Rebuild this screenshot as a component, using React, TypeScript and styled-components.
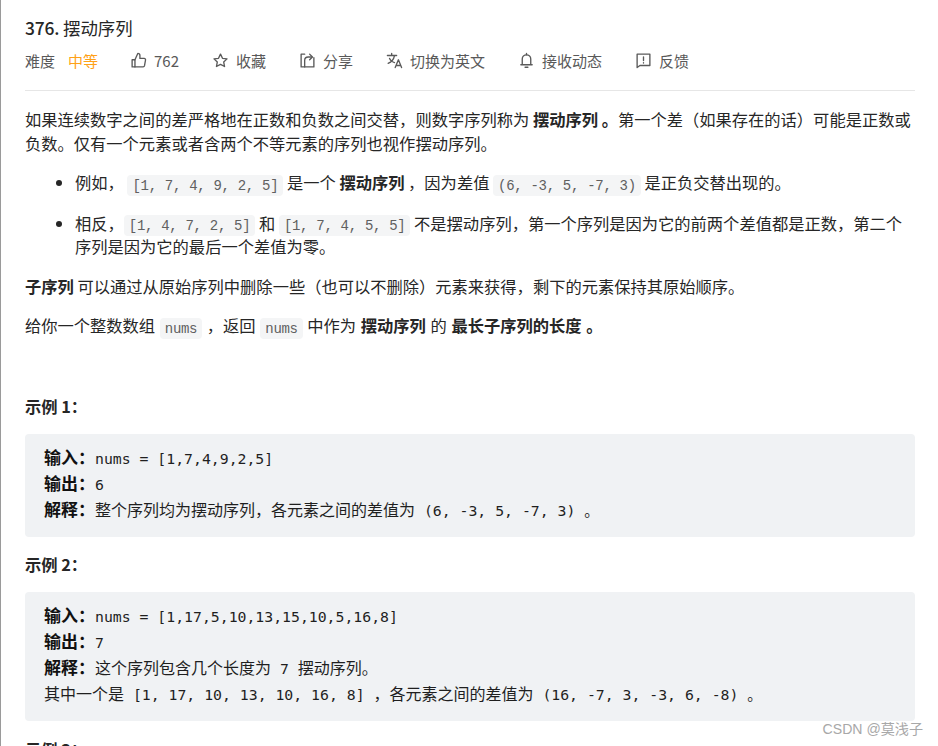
import React from "react";
import styled, { createGlobalStyle } from "styled-components";

const Global = createGlobalStyle`
  html, body { margin: 0; padding: 0; background: #fff; }
  body { width: 938px; height: 746px; overflow: hidden; font-family: "Noto Sans CJK SC", sans-serif; }
`;

const Page = styled.div`
  position: relative;
  box-sizing: border-box;
  width: 938px;
  height: 746px;
  overflow: hidden;
  border-left: 1px solid #9a9a9a;
  padding: 16px 23px 0 24px;
  color: #262626;
`;

const Title = styled.h1`
  margin: 0;
  font-size: 17.4px;
  font-weight: 400;
  line-height: 24px;
  color: #262626;
`;

const Num = styled.span`
  font-weight: 500;
  letter-spacing: -0.2px;
`;

const Meta = styled.div`
  display: flex;
  align-items: center;
  height: 24px;
  margin-top: 8px;
  font-size: 15px;
  color: #595959;
`;

const Level = styled.span`
  color: #ffa116;
  margin-left: 13px;
`;

const Action = styled.span<{ $gap: number }>`
  display: inline-flex;
  align-items: center;
  gap: 7px;
  margin-left: ${(p) => p.$gap}px;
  svg { display: block; }
`;

const Divider = styled.div`
  height: 1px;
  background: #e6e6e6;
  margin: 18px 0 17px;
`;

const Body = styled.div`
  font-size: 16.28px;
  line-height: 23.5px;
  color: #262626;
`;

const Para = styled.p<{ $top?: number; $spread?: boolean }>`
  margin: ${(p) => p.$top ?? 0}px 0 0;
  word-spacing: ${(p) => (p.$spread ? "1px" : "normal")};
`;

const List = styled.ul`
  margin: 16px 0 0;
  padding: 0 0 0 50px;
`;

const Item = styled.li<{ $top?: number }>`
  margin-top: ${(p) => p.$top ?? 0}px;
`;

const Code = styled.code`
  font-family: "Liberation Mono", "Noto Sans CJK SC", monospace;
  font-size: 14px;
  letter-spacing: -0.3px;
  word-spacing: 0;
  line-height: 1;
  color: #606060;
  background: #f4f5f6;
  border-radius: 4px;
  padding: 2.5px 5px;
`;

const Example = styled.h4<{ $top: number }>`
  margin: ${(p) => p.$top}px 0 0;
  font-size: 16.28px;
  line-height: 24px;
  font-weight: 700;
  color: #262626;
`;

const Pre = styled.div`
  margin-top: 16px;
  background: #f0f2f4;
  border-radius: 4px;
  padding: 12px 18px 13px 19px;
  font-family: "DejaVu Sans Mono", "Noto Sans CJK SC", monospace;
  font-size: 14.8px;
  color: #1f1f1f;
`;

const Line = styled.div`
  height: 26px;
  line-height: 26px;
  white-space: pre;
`;

const Label = styled.strong`
  font-family: "Noto Sans CJK SC", sans-serif;
  font-size: 17px;
  line-height: 1;
  color: #111;
`;

const CJK = styled.span`
  font-family: "Noto Sans CJK SC", sans-serif;
  font-size: 16px;
  line-height: 1;
`;

const Watermark = styled.div`
  position: absolute;
  right: 15px;
  bottom: 8px;
  font-family: "Liberation Sans", "Noto Sans CJK SC", sans-serif;
  font-size: 14.1px;
  line-height: 18px;
  color: #a8a8a8;
`;

const Icon = ({ children }: { children: React.ReactNode }) => (
  <svg width="17" height="17" viewBox="0 0 24 24" fill="none" stroke="#5a5a5a" strokeWidth="1.9" strokeLinejoin="round" strokeLinecap="round">
    {children}
  </svg>
);

export default function App() {
  return (
    <Page>
      <Global />
      <Title><Num>376.</Num> 摆动序列</Title>
      <Meta>
        <span>难度</span>
        <Level>中等</Level>
        <Action $gap={32}>
          <Icon>
            <path d="M7 11v10H3V11z" />
            <path d="M7 11l4-9c1.7 0 3 1.3 3 3v4h6c1.2 0 2.1 1.1 1.9 2.3l-1.4 8c-.2 1-1 1.7-2 1.7H7" />
          </Icon>
          <span>762</span>
        </Action>
        <Action $gap={33}>
          <Icon>
            <path d="M12 3l2.8 5.9 6.4.8-4.7 4.4 1.2 6.4L12 17.4l-5.7 3.1 1.2-6.4-4.7-4.4 6.4-.8z" />
          </Icon>
          <span>收藏</span>
        </Action>
        <Action $gap={33}>
          <Icon>
            <path d="M8 3H3v18h18V8" />
            <path d="M8 21v-9c0-3 2-5 5-5h5" />
            <path d="M15 3l4 4-4 4" />
          </Icon>
          <span>分享</span>
        </Action>
        <Action $gap={33}>
          <Icon>
            <path d="M2 5h13M8 2v3M12 5c-1 5-4 9-9 11M5 9c1 3 4 5 7 6" />
            <path d="M13 22l4.5-11L22 22M14.5 19h6" />
          </Icon>
          <span>切换为英文</span>
        </Action>
        <Action $gap={33}>
          <Icon>
            <path d="M6 17V10a6 6 0 0 1 12 0v7" />
            <path d="M4 18h16M10 21.5h4M12 2v2" />
          </Icon>
          <span>接收动态</span>
        </Action>
        <Action $gap={33}>
          <Icon>
            <path d="M3 3h18v16H7l-4 3z" />
            <path d="M12 7v5M12 15v.5" />
          </Icon>
          <span>反馈</span>
        </Action>
      </Meta>
      <Divider />
      <Body>
        <Para>
          如果连续数字之间的差严格地在正数和负数之间交替，则数字序列称为 <strong>摆动序列 。</strong>第一个差（如果存在的话）可能是正数或负数。仅有一个元素或者含两个不等元素的序列也视作摆动序列。
        </Para>
        <List>
          <Item>
            例如， <Code>[1, 7, 4, 9, 2, 5]</Code> 是一个 <strong>摆动序列</strong> ，因为差值 <Code>(6, -3, 5, -7, 3)</Code> 是正负交替出现的。
          </Item>
          <Item $top={17}>
            相反，<Code>[1, 4, 7, 2, 5]</Code> 和 <Code>[1, 7, 4, 5, 5]</Code> 不是摆动序列，第一个序列是因为它的前两个差值都是正数，第二个序列是因为它的最后一个差值为零。
          </Item>
        </List>
        <Para $top={16}>
          <strong>子序列</strong> 可以通过从原始序列中删除一些（也可以不删除）元素来获得，剩下的元素保持其原始顺序。
        </Para>
        <Para $top={16} $spread>
          给你一个整数数组 <Code>nums</Code> ，返回 <Code>nums</Code> 中作为 <strong>摆动序列</strong> 的 <strong>最长子序列的长度 。</strong>
        </Para>
      </Body>
      <Example $top={56}>示例 1：</Example>
      <Pre>
        <Line><Label>输入：</Label>nums = [1,7,4,9,2,5]</Line>
        <Line><Label>输出：</Label>6</Line>
        <Line><Label>解释：</Label><CJK>整个序列均为摆动序列，各元素之间的差值为</CJK> (6, -3, 5, -7, 3) 。</Line>
      </Pre>
      <Example $top={15}>示例 2：</Example>
      <Pre>
        <Line><Label>输入：</Label>nums = [1,17,5,10,13,15,10,5,16,8]</Line>
        <Line><Label>输出：</Label>7</Line>
        <Line><Label>解释：</Label><CJK>这个序列包含几个长度为</CJK> 7 <CJK>摆动序列。</CJK></Line>
        <Line><CJK>其中一个是</CJK> [1, 17, 10, 13, 10, 16, 8] <CJK>，各元素之间的差值为</CJK> (16, -7, 3, -3, 6, -8) 。</Line>
      </Pre>
      <Example $top={16}>示例 3：</Example>
      <Watermark>CSDN @莫浅子</Watermark>
    </Page>
  );
}
